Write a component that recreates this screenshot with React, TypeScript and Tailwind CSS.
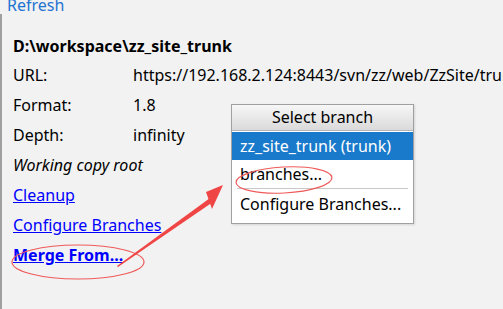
import React from "react";

const rows = [
  { label: "URL:", value: "https://192.168.2.124:8443/svn/zz/web/ZzSite/trunk" },
  { label: "Format:", value: "1.8" },
  { label: "Depth:", value: "infinity" },
];

const links = ["Cleanup", "Configure Branches"];

function BranchMenu() {
  return (
    <div className="absolute left-[231px] top-[104px] w-[183px] h-[120px] border border-[#a0a0a0] bg-white shadow-[1px_1px_2px_rgba(0,0,0,.12)] text-[16px]">
      <div className="h-[26px] border-b border-[#b4b4b4] bg-gradient-to-b from-[#f7f7f7] to-[#dadada] text-center leading-[25px] text-black">
        Select branch
      </div>
      <div className="mt-[1px] h-[28px] bg-[#1979ca] pl-[8px] leading-[28px] text-white whitespace-nowrap">
        zz_site_trunk (trunk)
      </div>
      <div className="h-[28px] pl-[8px] leading-[28px] text-black">branches...</div>
      <div className="mx-[5px] h-px bg-[#c8c8c8]" />
      <div className="h-[30px] pl-[8px] leading-[30px] text-black whitespace-nowrap">
        Configure Branches...
      </div>
    </div>
  );
}

function Annotations() {
  return (
    <svg
      className="absolute left-0 top-0 pointer-events-none"
      width="503"
      height="309"
      viewBox="0 0 503 309"
    >
      <ellipse cx="78" cy="262" rx="66" ry="17" fill="none" stroke="#f05a5a" strokeWidth="1.2" />
      <ellipse cx="284" cy="180" rx="48" ry="13" fill="none" stroke="#f05a5a" strokeWidth="1.2" transform="rotate(-3 284 180)" />
      <polygon points="117,266 210,198 213,202 118,267" fill="#f04545" />
      <polygon points="223,185 206,192 212,209" fill="#f04545" />
    </svg>
  );
}

export default function App() {
  return (
    <div
      className="relative w-[503px] h-[309px] overflow-hidden bg-[#f2f2f2] text-[16px] text-black"
      style={{ fontFamily: '"Noto Sans", "Open Sans", sans-serif' }}
    >
      <div className="flex h-[14px] items-end pl-[7px]">
        <span className="leading-[18px] text-[#1f74d1]">Refresh</span>
      </div>
      <div className="h-[295px] border-l-2 border-[#a0a0a0] pl-[11px] pt-[18px]">
        <div className="h-[28px] leading-[28px] font-bold">D:\workspace\zz_site_trunk</div>
        {rows.map((r) => (
          <div key={r.label} className="flex h-[30px] items-center whitespace-nowrap">
            <span className="w-[120px] shrink-0">{r.label}</span>
            <span>{r.value}</span>
          </div>
        ))}
        <div className="h-[30px] leading-[30px] italic">Working copy root</div>
        {links.map((l) => (
          <div key={l} className="h-[30px] leading-[30px]">
            <a className="text-[#0000ff] underline">{l}</a>
          </div>
        ))}
        <div className="h-[30px] leading-[30px]">
          <a className="font-bold text-[#0000ff] underline">Merge From...</a>
        </div>
      </div>
      <BranchMenu />
      <Annotations />
    </div>
  );
}
